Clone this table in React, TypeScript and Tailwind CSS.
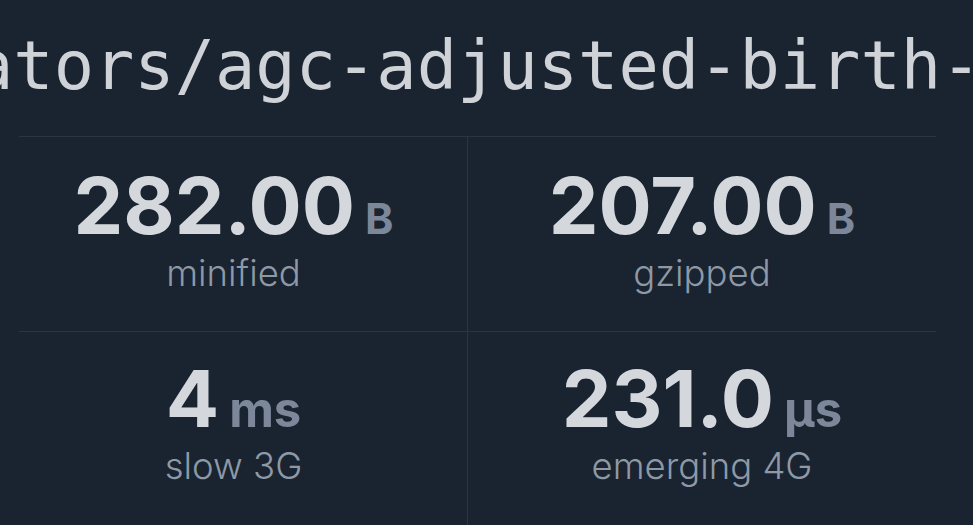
const stats = [
    [
        { value: '282.00', unit: 'B', label: 'minified' },
        { value: '207.00', unit: 'B', label: 'gzipped' },
    ],
    [
        { value: '4', unit: 'ms', label: 'slow 3G' },
        { value: '231.0', unit: 'µs', label: 'emerging 4G' },
    ],
];

function Stat({ value, unit, label }: { value: string; unit: string; label: string }) {
    const isByte = unit === 'B';
    return (
        <div className="flex flex-col items-center">
            <div className="flex items-baseline gap-[10px] font-['Inter',sans-serif] leading-none">
                <span className="text-[79px] font-bold text-[#d4d8dd]">{value}</span>
                <span className={`${isByte ? 'text-[43px]' : 'text-[49px]'} font-bold text-[#7c8899]`}>{unit}</span>
            </div>
            <div className="mt-[10px] font-['Inter',sans-serif] text-[36.5px] font-light leading-none text-[#8e99a6]">
                {label}
            </div>
        </div>
    );
}

export default function App() {
    return (
        <div className="h-[525px] w-[973px] overflow-hidden bg-[#1a2330]">
            {/* package name, cut at both edges */}
            <div className="h-[136px] overflow-hidden whitespace-nowrap">
                <h1 className="ml-[-27px] pt-[33px] font-['DejaVu_Sans_Mono',monospace] text-[67px] leading-none text-[#cfd3d8]">
                    ators/agc-adjusted-birth-weight
                </h1>
            </div>

            <div className="ml-[19px] w-[917px]">
                {stats.map((row, i) => (
                    <div
                        key={i}
                        className={`grid grid-cols-[449px_468px] border-t border-[#2b3542] ${i === 0 ? 'h-[195px]' : 'h-[200px]'}`}
                    >
                        <div className={`border-r border-[#2b3542] pr-[19px] ${i === 0 ? 'pt-[29px]' : 'pt-[27px]'}`}>
                            <Stat {...row[0]} />
                        </div>
                        <div className={i === 0 ? 'pt-[29px]' : 'pt-[27px]'}>
                            <Stat {...row[1]} />
                        </div>
                    </div>
                ))}
            </div>
        </div>
    );
}
